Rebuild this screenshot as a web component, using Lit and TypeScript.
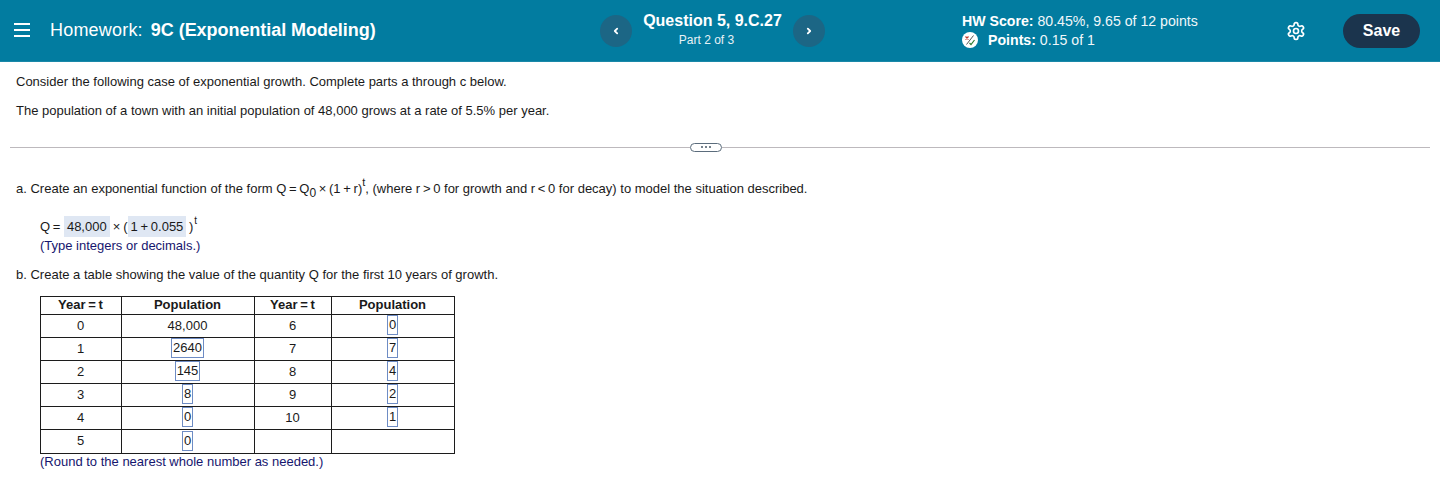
import { LitElement, html, css, svg } from "lit";
import { customElement } from "lit/decorators.js";

const rows: [string, string, boolean, string, string, boolean][] = [
  ["0", "48,000", false, "6", "0", true],
  ["1", "2640", true, "7", "7", true],
  ["2", "145", true, "8", "4", true],
  ["3", "8", true, "9", "2", true],
  ["4", "0", true, "10", "1", true],
  ["5", "0", true, "", "", false],
];

@customElement("app-root")
export class AppRoot extends LitElement {
  static styles = css`
    :host { display: block; width: 1440px; height: 495px; overflow: hidden; background: #fff; font-family: "Liberation Sans", Arial, sans-serif; color: #1a1a1a; font-size: 13px; }
    .top { display: flex; align-items: center; height: 62px; background: #027ca0; color: #fff; box-sizing: border-box; border-bottom: 1px solid #1a88a8; }
    .menu { margin-left: 14px; margin-top: -1px; width: 16px; height: 14px; flex: none; display: flex; flex-direction: column; justify-content: space-between; }
    .menu i { display: block; height: 2px; background: #fff; }
    .title { margin-left: 20px; width: 550px; flex: none; font-size: 18px; white-space: nowrap; }
    .title span { letter-spacing: 0.2px; }
    .title b { margin-left: 3px; letter-spacing: -0.05px; }
    .nav { width: 32px; height: 32px; border-radius: 50%; background: #1c6685; flex: none; display: flex; align-items: center; justify-content: center; }
    .q { width: 161px; flex: none; text-align: center; line-height: 19px; margin-top: -2px; }
    .q b { display: block; font-size: 16px; line-height: 21px; }
    .q span { display: block; font-size: 12px; color: #e6f2f6; padding-right: 12px; }
    .score { margin-left: 137px; width: 324px; flex: none; font-size: 14.15px; line-height: 19px; color: #f0f7fa; }
    .score b { color: #fff; }
    .pts { display: flex; align-items: center; }
    .pts svg { margin-right: 10px; }
    .gear { flex: none; display: block; }
    .save { margin-left: 37px; width: 77px; height: 34px; border-radius: 17px; background: #1b344d; color: #fff; font-weight: 700; font-size: 16px; display: flex; align-items: center; justify-content: center; flex: none; }
    .intro { padding: 12px 16px 0; }
    .intro p { margin: 0 0 13px; line-height: 16px; }
    .divider { margin: 20px 10px 0; height: 16px; display: flex; align-items: center; }
    .divider hr { flex: 1; margin: 0; border: 0; height: 1px; background: #bdb9bd; }
    .divider hr.left { flex: none; width: 680px; }
    .pill { width: 32px; height: 9px; box-sizing: border-box; border: 1.5px solid #5b6c7c; border-radius: 5px; display: flex; align-items: center; justify-content: center; gap: 2px; background: #fff; }
    .pill i { width: 2px; height: 2px; border-radius: 50%; background: #4a5a68; }
    .parts { padding: 26px 16px 0; }
    .line { line-height: 16px; white-space: nowrap; height: 16px; }
    sub { font-size: 12px; line-height: 0; vertical-align: -4px; }
    sup { font-size: 11px; line-height: 0; vertical-align: 7px; }
    .op { margin: 0 2.7px; }
    .ans { margin: 19px 0 0 24px; height: 21px; line-height: 21px; white-space: nowrap; }
    .ans sup { font-size: 10px; margin-left: 1px; }
    .ans .lead { margin-right: 3.5px; }
    .fill { background: #dfe7f3; padding: 0 3px; height: 21px; line-height: 21px; display: inline-block; }
    .gap3 { margin: 0 3px; }
    .hint { color: #16166e; margin: 1px 0 0 24px; line-height: 16px; }
    .b { margin-top: 13px; }
    table { margin: 13px 0 0 23.5px; border-collapse: collapse; table-layout: fixed; width: 414px; font-size: 13px; }
    th, td { border: 1px solid #1c1c1c; padding: 0 0 2px; text-align: center; height: 23.1px; box-sizing: border-box; }
    th { height: 18px; font-weight: 700; line-height: 16px; padding: 0 0 1px; }
    .box { display: inline-block; border: 1.5px solid #6e8cc4; padding: 0 1px; line-height: 17px; height: 20px; box-sizing: border-box; vertical-align: middle; }
    .round { margin: 0 0 0 24px; color: #16166e; line-height: 16px; }
  `;

  private chev(d: string) {
    return html`<svg width="10" height="10" viewBox="0 0 10 10"><path d=${d} fill="none" stroke="#fff" stroke-width="1.8" stroke-linecap="round" stroke-linejoin="round"/></svg>`;
  }

  private cell(v: string, box: boolean) {
    return box ? html`<span class="box">${v}</span>` : v;
  }

  render() {
    return html`
      <div class="top">
        <div class="menu"><i></i><i></i><i></i></div>
        <div class="title"><span>Homework:</span> <b>9C (Exponential Modeling)</b></div>
        <div class="nav">${this.chev("M6.2 2.6 3.8 5l2.4 2.4")}</div>
        <div class="q"><b>Question 5, 9.C.27</b><span>Part 2 of 3</span></div>
        <div class="nav">${this.chev("M3.8 2.6 6.2 5 3.8 7.4")}</div>
        <div class="score">
          <div><b>HW Score:</b> 80.45%, 9.65 of 12 points</div>
          <div class="pts">
            <svg width="16" height="16" viewBox="0 0 16 16"><circle cx="8" cy="8" r="8" fill="#fff"/><path d="M3.5 4.5l3 3M6.5 4.5l-3 3" stroke="#c0392b" stroke-width="1.2"/><path d="M7.5 11l1.5 1.5 3.5-4.5" fill="none" stroke="#2e7d32" stroke-width="1.2"/><path d="M11.5 3.5l-7 9" stroke="#555" stroke-width="1"/></svg>
            <span><b>Points:</b> 0.15 of 1</span>
          </div>
        </div>
        <svg class="gear" width="20" height="20" viewBox="0 0 24 24" fill="none" stroke="#fff" stroke-width="2" stroke-linecap="round" stroke-linejoin="round">${svg`<path d="M12.22 2h-.44a2 2 0 0 0-2 2v.18a2 2 0 0 1-1 1.73l-.43.25a2 2 0 0 1-2 0l-.15-.08a2 2 0 0 0-2.73.73l-.22.38a2 2 0 0 0 .73 2.73l.15.1a2 2 0 0 1 1 1.72v.51a2 2 0 0 1-1 1.74l-.15.09a2 2 0 0 0-.73 2.73l.22.38a2 2 0 0 0 2.73.73l.15-.08a2 2 0 0 1 2 0l.43.25a2 2 0 0 1 1 1.73V20a2 2 0 0 0 2 2h.44a2 2 0 0 0 2-2v-.18a2 2 0 0 1 1-1.73l.43-.25a2 2 0 0 1 2 0l.15.08a2 2 0 0 0 2.73-.73l.22-.39a2 2 0 0 0-.73-2.73l-.15-.08a2 2 0 0 1-1-1.74v-.5a2 2 0 0 1 1-1.74l.15-.09a2 2 0 0 0 .73-2.73l-.22-.38a2 2 0 0 0-2.73-.73l-.15.08a2 2 0 0 1-2 0l-.43-.25a2 2 0 0 1-1-1.73V4a2 2 0 0 0-2-2z"/><circle cx="12" cy="12" r="3"/>`}</svg>
        <div class="save">Save</div>
      </div>
      <div class="intro">
        <p>Consider the following case of exponential growth. Complete parts a through c below.</p>
        <p>The population of a town with an initial population of 48,000 grows at a rate of 5.5% per year.</p>
      </div>
      <div class="divider"><hr class="left" /><div class="pill"><i></i><i></i><i></i></div><hr /></div>
      <div class="parts">
        <div class="line">a. Create an exponential function of the form Q<span class="op">=</span>Q<sub>0</sub><span class="op">×</span>(1<span class="op">+</span>r)<sup>t</sup>, (where r<span class="op">&gt;</span>0 for growth and r<span class="op">&lt;</span>0 for decay) to model the situation described.</div>
        <div class="ans">Q<span class="op lead">=</span><span class="fill">48,000</span><span class="gap3">×</span>(<span class="fill">1<span class="op">+</span>0.055</span>&#8201;)<sup>t</sup></div>
        <div class="hint">(Type integers or decimals.)</div>
        <div class="line b">b. Create a table showing the value of the quantity Q for the first 10 years of growth.</div>
        <table>
          <colgroup><col style="width:81px" /><col style="width:133px" /><col style="width:77px" /><col style="width:123px" /></colgroup>
          <tr><th>Year<span class="op">=</span>t</th><th>Population</th><th>Year<span class="op">=</span>t</th><th>Population</th></tr>
          ${rows.map((r) => html`<tr><td>${r[0]}</td><td>${this.cell(r[1], r[2])}</td><td>${r[3]}</td><td>${this.cell(r[4], r[5])}</td></tr>`)}
        </table>
        <div class="round">(Round to the nearest whole number as needed.)</div>
      </div>
    `;
  }
}
